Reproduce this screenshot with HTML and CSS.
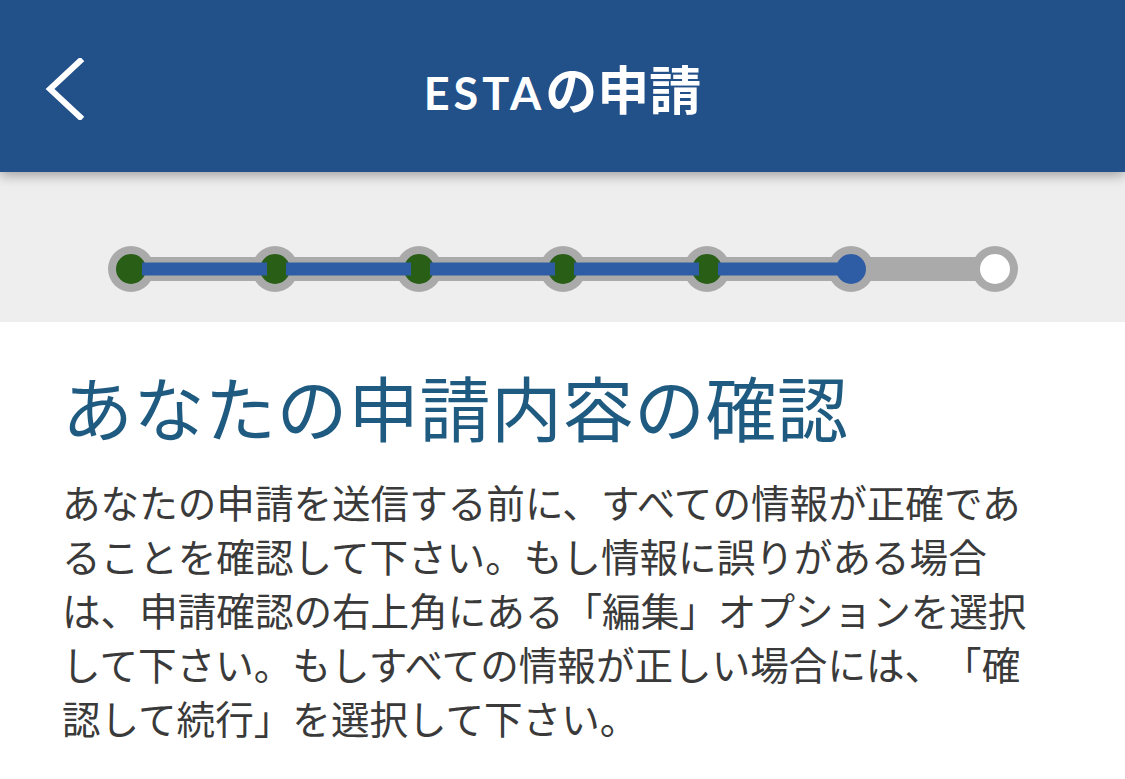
FILE: index.html
```html
<!DOCTYPE html>
<html lang="ja">
<head>
<meta charset="utf-8">
<title>ESTAの申請</title>
<link rel="stylesheet" href="styles.css">
</head>
<body>
<header class="appbar">
  <button class="back" aria-label="戻る">
    <svg width="40" height="62" viewBox="0 0 40 62"><polyline points="35,3 5,31 35,59" fill="none" stroke="#fff" stroke-width="6" stroke-linecap="square" stroke-linejoin="miter"/></svg>
  </button>
  <h1 class="title"><span class="title-latin">ESTA</span><span class="title-ja">の申請</span></h1>
</header>
<section class="progress">
  <svg class="steps" width="910" height="46" viewBox="0 0 910 46">
    <rect x="23" y="11" width="864" height="24" fill="#aaaaaa"/>
    <g fill="#aaaaaa">
      <circle cx="23" cy="23" r="23"/><circle cx="167" cy="23" r="23"/><circle cx="311" cy="23" r="23"/><circle cx="455" cy="23" r="23"/><circle cx="599" cy="23" r="23"/><circle cx="743" cy="23" r="23"/><circle cx="887" cy="23" r="23"/>
    </g>
    <g fill="#285e16">
      <circle cx="23" cy="23" r="15"/><circle cx="167" cy="23" r="15"/><circle cx="311" cy="23" r="15"/><circle cx="455" cy="23" r="15"/><circle cx="599" cy="23" r="15"/>
    </g>
    <circle cx="743" cy="23" r="15" fill="#2e5da5"/>
    <circle cx="887" cy="23" r="15" fill="#ffffff"/>
    <g fill="#2e5da5">
      <rect x="34" y="16.5" width="125" height="13"/><rect x="178" y="16.5" width="125" height="13"/><rect x="322" y="16.5" width="125" height="13"/><rect x="466" y="16.5" width="125" height="13"/><rect x="610" y="16.5" width="125" height="13"/>
    </g>
  </svg>
</section>
<main class="content">
  <h2 class="heading">あなたの申請内容の確認</h2>
  <p class="body">あなたの申請を送信する前に、すべての情報が正確であ<br>ることを確認して下さい。もし情報に誤りがある場合<br>は、申請確認の右上角にある「編集」オプションを選択<br>して下さい。もしすべての情報が正しい場合には、「確<br>認して続行」を選択して下さい。</p>
</main>
</body>
</html>
```
FILE: styles.css
```css
html, body {
  margin: 0;
  padding: 0;
  background: #ffffff;
  font-family: "Lato", "Noto Sans CJK JP", sans-serif;
}

.appbar {
  position: relative;
  z-index: 2;
  height: 172px;
  background: #22518a;
  display: flex;
  align-items: center;
  justify-content: center;
  box-shadow: 0 3px 12px rgba(0, 0, 0, 0.35);
}

.back {
  position: absolute;
  left: 45px;
  top: 58px;
  background: none;
  border: 0;
  padding: 0;
  margin: 0;
  display: block;
}

.back svg {
  display: block;
}

.title {
  margin: 0;
  color: #ffffff;
  font-weight: 700;
  line-height: 1;
  padding-top: 6px;
  display: flex;
  align-items: baseline;
  text-spacing-trim: space-all;
}

.title-latin {
  font-family: "Lato", sans-serif;
  font-size: 45px;
  letter-spacing: 4px;
}

.title-ja {
  font-family: "Noto Sans CJK JP", sans-serif;
  font-size: 52px;
}

.progress {
  height: 150px;
  background: #eeeeee;
  display: flex;
  justify-content: center;
  align-items: flex-start;
  padding-top: 74px;
  box-sizing: border-box;
}

.steps {
  display: block;
  margin-left: 1px;
}

.content {
  padding: 0 62px;
}

.heading {
  margin: 40px 0 0 0;
  font-family: "Noto Sans CJK JP", sans-serif;
  font-weight: 400;
  font-size: 71px;
  line-height: 86px;
  color: #1f5a80;
  letter-spacing: 0.5px;
  text-spacing-trim: space-all;
}

.body {
  margin: 26px 0 0 0;
  font-family: "Noto Sans CJK JP", sans-serif;
  font-weight: 400;
  font-size: 38.6px;
  line-height: 54px;
  color: #3a3a3a;
  white-space: nowrap;
  text-spacing-trim: space-all;
}
```
